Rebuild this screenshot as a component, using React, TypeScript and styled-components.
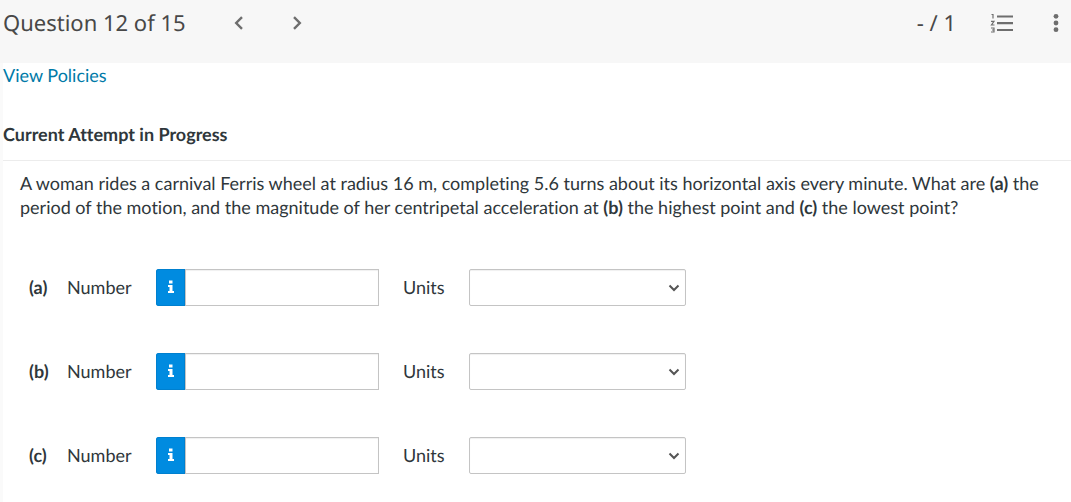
import React from 'react';
import styled, { createGlobalStyle } from 'styled-components';

const Global = createGlobalStyle`
  * { box-sizing: border-box; }
  body {
    margin: 0; background: #fff; color: #2f373b; font: 18px/24px Lato, sans-serif;
    font-variant-ligatures: none; text-rendering: geometricPrecision;
  }
`;
const Header = styled.header`
  display: flex; align-items: center; height: 63px; padding: 0 5px 18px 3px;
  background: #f7f7f7; font: 22px/32px "Noto Sans", "Open Sans", sans-serif; color: #484848;
`;
const Title = styled.h1`font: inherit; margin: 0; min-width: 220px;`;
const IconButton = styled.button<{ $w: number }>`
  display: flex; align-items: center; justify-content: center; width: ${p => p.$w}px; height: 32px;
  padding: 0; border: 0; background: none; color: #6e6e6e; font: inherit;
`;
const NavButtons = styled.nav`display: flex; gap: 26px;`;
const Score = styled.span`margin-left: auto; margin-right: 30px;`;
const Tools = styled.div`display: flex; gap: 28px;`;
const Main = styled.main`border-left: 3px solid #fafafa;`;
const Intro = styled.div`padding: 0 0 14px; border-bottom: 1px solid #ececec;`;
const PolicyLink = styled.a`color: #007aa8; text-decoration: none;`;
const Status = styled.h2`margin: 35px 0 0; font-size: 18px; line-height: 24px; font-weight: 700;`;
const Question = styled.p`margin: 10px 20px 50px 17px;`;
const Answers = styled.div`display: grid; gap: 47px; padding: 0 26px 28px;`;
const Row = styled.div`display: flex; align-items: flex-start; line-height: 36px;`;
const Part = styled.b`width: 38px;`;
const NumberLabel = styled.label`width: 89px;`;
const Field = styled.div`display: flex; width: 223px; height: 37px; margin-right: 24px;`;
const Info = styled.button`
  width: 29px; padding: 0 0 2px 1px; border: 0; border-radius: 3px 0 0 3px; background: #008be0;
  box-shadow: inset 0 0 0 1px #0080cf; color: #fff; display: grid; place-items: center;
`;
const Input = styled.input`
  flex: 1; min-width: 0; border: 1px solid #c4c4c4; font: inherit; line-height: 24px; padding: 0 8px;
  box-shadow: inset 0 1px 1px #f0f0f0;
`;
const UnitsLabel = styled.label`width: 66px;`;
const SelectBox = styled.div`
  display: grid; width: 217px; height: 37px; align-items: center;
  & > * { grid-area: 1 / 1; }
  & > svg { justify-self: end; margin-right: 6px; pointer-events: none; }
`;
const Select = styled.select`
  appearance: none; width: 100%; height: 37px; border: 1px solid #c4c4c4; border-radius: 2px;
  background: #fff; font: inherit; line-height: 24px; box-shadow: inset 0 1px 1px #f0f0f0;
`;

const Chevron = ({ d }: { d: string }) => (
  <svg width="12" height="14" viewBox="0 0 12 14" fill="none" stroke="currentColor" strokeWidth="2.4"><path d={d} /></svg>
);

export default function App() {
  return (
    <>
      <Global />
      <Header>
        <Title>Question 12 of 15</Title>
        <NavButtons>
          <IconButton $w={32} aria-label="Previous question"><Chevron d="M9 1.200 3.200 7 9 12.800" /></IconButton>
          <IconButton $w={32} aria-label="Next question"><Chevron d="M3 1.200 8.800 7 3 12.800" /></IconButton>
        </NavButtons>
        <Score>- / 1</Score>
        <Tools>
          <IconButton $w={32} aria-label="Question list">
            <svg width="24" height="20" viewBox="0 0 24 20" fill="none" stroke="currentColor">
              <path d="M7 3.500h16M7 10.200h16M7 17h16" strokeWidth="2.200" />
              <path d="M1.500 1.500H3V5.500M1 8.300h3L1.500 12H4.500M1 15h3v4H1M2 17h2" strokeWidth="1.200" />
            </svg>
          </IconButton>
          <IconButton $w={20} aria-label="More options">
            <svg width="6" height="20" viewBox="0 0 6 20" fill="currentColor"><circle cx="3" cy="3.300" r="2.400" /><circle cx="3" cy="10" r="2.400" /><circle cx="3" cy="16.700" r="2.400" /></svg>
          </IconButton>
        </Tools>
      </Header>
      <Main>
        <Intro>
          <PolicyLink href="#policies">View Policies</PolicyLink>
          <Status>Current Attempt in Progress</Status>
        </Intro>
        <Question>
          A woman rides a carnival Ferris wheel at radius 16 m, completing 5.6 turns about its horizontal axis every minute. What are <b>(a)</b> the period of the motion, and the magnitude of her centripetal acceleration at <b>(b)</b> the highest point and <b>(c)</b> the lowest point?
        </Question>
        <Answers>
          {['a', 'b', 'c'].map(id => (
            <Row key={id}>
              <Part>({id})</Part>
              <NumberLabel htmlFor={`number-${id}`}>Number</NumberLabel>
              <Field>
                <Info aria-label="Number format information">
                  <svg width="8" height="14" viewBox="0 0 8 14" fill="currentColor"><path d="M2 .5h3.500v3H2zM1 5h4.500v6H7v2H1v-2h1.500V7H1z" /></svg>
                </Info>
                <Input id={`number-${id}`} />
              </Field>
              <UnitsLabel htmlFor={`units-${id}`}>Units</UnitsLabel>
              <SelectBox>
                <Select id={`units-${id}`} />
                <svg width="12" height="8" viewBox="0 0 12 8" fill="none" stroke="#555" strokeWidth="2"><path d="m1.500 1.500 4.500 4.500 4.500-4.500" /></svg>
              </SelectBox>
            </Row>
          ))}
        </Answers>
      </Main>
    </>
  );
}
